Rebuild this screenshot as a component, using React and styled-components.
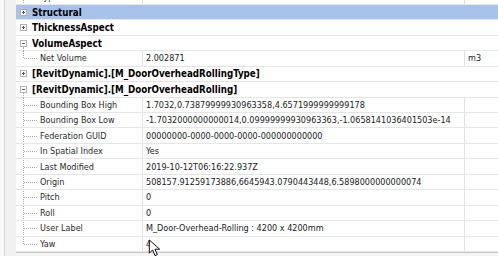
import styled, { createGlobalStyle, css } from "styled-components";

const GlobalStyle = createGlobalStyle`
  html, body {
    margin: 0;
    padding: 0;
    background: #ffffff;
    overflow: hidden;
  }
`;

const Frame = styled.div`
  display: flex;
  width: 498px;
  height: 256px;
  overflow: hidden;
  background: #f8f8f8;
  font-family: "DejaVu Sans Condensed", "DejaVu Sans", sans-serif;
  font-size: 9px;
  color: #1a1a1a;
`;

const Gutter = styled.div`
  margin-left: 4px;
  width: 11px;
  flex-shrink: 0;
  background: #f0f0f0;
  border-left: 1px solid #d4d4d4;
`;

const Rows = styled.div`
  flex: 1;
  display: flex;
  flex-direction: column;
  margin-top: -10.5px;
  background: #ffffff;
`;

const rowBase = css`
  height: 15.45px;
  box-sizing: border-box;
  border-bottom: 1px solid #e6e6e6;
  flex-shrink: 0;
`;

const CategoryRow = styled.div`
  ${rowBase};
  display: flex;
  align-items: center;
  gap: 5px;
  padding-left: 4px;
  position: relative;
  font-weight: 700;
  font-size: 9.7px;
  color: #000;
  background: ${(p) => (p.$selected ? "#a7c3e9" : "#ffffff")};
  ${(p) =>
    p.$open &&
    css`
      &::after {
        content: "";
        position: absolute;
        left: 7px;
        top: 11px;
        bottom: -1px;
        border-left: 1px dotted #a8a8a8;
      }
    `}
`;

const Toggle = styled.span`
  width: 7px;
  height: 7px;
  box-sizing: border-box;
  border: 1px solid #b4b4b4;
  background: #fcfcfc;
  position: relative;
  flex-shrink: 0;

  &::before {
    content: "";
    position: absolute;
    left: 1px;
    right: 1px;
    top: 2px;
    height: 1px;
    background: #555;
  }

  ${(p) =>
    !p.$open &&
    css`
      &::after {
        content: "";
        position: absolute;
        top: 1px;
        bottom: 1px;
        left: 2px;
        width: 1px;
        background: #555;
      }
    `}
`;

const PropRow = styled.div`
  ${rowBase};
  display: grid;
  grid-template-columns: 127px 322px 1fr;
  align-items: stretch;
`;

const Cell = styled.div`
  display: flex;
  align-items: center;
  white-space: nowrap;
  overflow: hidden;
  border-right: 1px solid #e2e2e2;
  padding-left: 3px;
  position: relative;
`;

const LabelCell = styled(Cell)`
  padding-left: 24px;
  color: #2a2a2a;

  &::before {
    content: "";
    position: absolute;
    left: 7px;
    top: -1px;
    bottom: ${(p) => (p.$last ? "50%" : "-1px")};
    border-left: 1px dotted #a8a8a8;
  }

  &::after {
    content: "";
    position: absolute;
    left: 8px;
    width: 13px;
    top: 50%;
    border-top: 1px dotted #a8a8a8;
  }
`;

const UnitCell = styled(Cell)`
  border-right: none;
  padding-left: 3px;
`;

const Filler = styled.div`
  flex: 1;
  background: #f4f4f4;
  border-top: 1px solid #c8c8c8;
`;

const Pointer = styled.svg`
  position: absolute;
  left: 148px;
  top: 239px;
  width: 13px;
  height: 18px;
`;

const rows = [
  { type: "prop", label: "Type Schedule", value: "None" },
  { type: "cat", label: "Structural", selected: true },
  { type: "cat", label: "ThicknessAspect" },
  { type: "cat", label: "VolumeAspect", open: true },
  { type: "prop", label: "Net Volume", value: "2.002871", unit: "m3", last: true },
  { type: "cat", label: "[RevitDynamic].[M_DoorOverheadRollingType]" },
  { type: "cat", label: "[RevitDynamic].[M_DoorOverheadRolling]", open: true },
  { type: "prop", label: "Bounding Box High", value: "1.7032,0.73879999930963358,4.6571999999999178" },
  { type: "prop", label: "Bounding Box Low", value: "-1.7032000000000014,0.09999999930963363,-1.0658141036401503e-14" },
  { type: "prop", label: "Federation GUID", value: "00000000-0000-0000-0000-000000000000" },
  { type: "prop", label: "In Spatial Index", value: "Yes" },
  { type: "prop", label: "Last Modified", value: "2019-10-12T06:16:22.937Z" },
  { type: "prop", label: "Origin", value: "508157.91259173886,6645943.0790443448,6.5898000000000074" },
  { type: "prop", label: "Pitch", value: "0" },
  { type: "prop", label: "Roll", value: "0" },
  { type: "prop", label: "User Label", value: "M_Door-Overhead-Rolling : 4200 x 4200mm" },
  { type: "prop", label: "Yaw", value: "4", last: true },
];

export default function App() {
  return (
    <>
      <GlobalStyle />
      <Frame>
        <Gutter />
        <Rows>
          {rows.map((r, i) =>
            r.type === "cat" ? (
              <CategoryRow key={i} $selected={r.selected} $open={r.open}>
                <Toggle $open={r.open} />
                {r.label}
              </CategoryRow>
            ) : (
              <PropRow key={i}>
                <LabelCell $last={r.last}>{r.label}</LabelCell>
                <Cell>{r.value}</Cell>
                <UnitCell>{r.unit}</UnitCell>
              </PropRow>
            )
          )}
          <Filler />
        </Rows>
      </Frame>
      <Pointer viewBox="0 0 13 19">
        <path
          d="M1 1 L1 15 L4.5 11.5 L7 17.5 L9.5 16.5 L7 10.8 L12 10.8 Z"
          fill="#ffffff"
          stroke="#000000"
          strokeWidth="1"
          strokeLinejoin="miter"
        />
      </Pointer>
    </>
  );
}
